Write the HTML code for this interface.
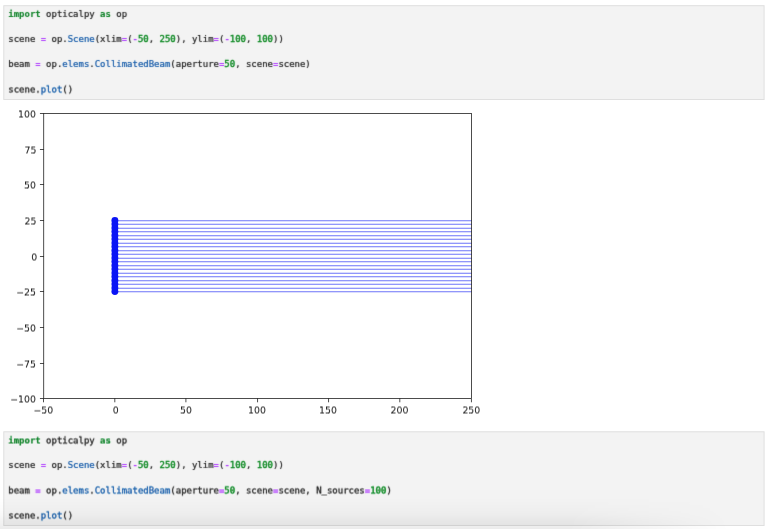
<!DOCTYPE html>
<html><head><meta charset="utf-8"><title>opticalpy</title>
<style>
html,body{margin:0;padding:0;background:#fff;}
body{width:768px;height:529px;position:relative;overflow:hidden;}
svg{position:absolute;left:0;top:0;display:block;will-change:transform;}
.c{font-family:"DejaVu Sans Mono","Liberation Mono",monospace;font-size:8.98px;color:#1e1e1e;fill:currentColor;stroke:currentColor;stroke-width:0.22px;white-space:pre;}
.h{stroke-width:0.3px;}
.h .k{stroke-width:0.2px;}
.h .o{stroke-width:0.15px;}
.h .n{stroke-width:0.5px;}
.k{color:#12842a;font-weight:bold;stroke-width:0.1px;}
.o{color:#b140ff;font-weight:bold;stroke-width:0;}
.n{color:#0c8a24;stroke-width:0.4px;}
.p{color:#1259a8;}
.t{font-family:"DejaVu Sans","Liberation Sans",sans-serif;font-size:9.4px;fill:#111;}
</style></head><body>
<svg width="768" height="529" viewBox="0 0 768 529">
<defs><filter id="fA" filterUnits="userSpaceOnUse" x="0" y="0" width="768" height="529"><feConvolveMatrix order="3 3" kernelMatrix="0.00810 0.07380 0.00810 0.07380 0.67240 0.07380 0.00810 0.07380 0.00810" edgeMode="none" preserveAlpha="false"/></filter><filter id="fC" filterUnits="userSpaceOnUse" x="0" y="0" width="768" height="529"><feConvolveMatrix order="3 2" kernelMatrix="0.00000 0.50000 0.00000 0.00000 0.50000 0.00000" targetX="1" targetY="0" edgeMode="none" preserveAlpha="false"/></filter><filter id="fB" filterUnits="userSpaceOnUse" x="0" y="0" width="768" height="529"><feConvolveMatrix order="3 2" kernelMatrix="0.04500 0.41000 0.04500 0.04500 0.41000 0.04500" targetX="1" targetY="0" edgeMode="none" preserveAlpha="false"/></filter></defs>
<rect x="3.80" y="5.70" width="760.30" height="93.80" fill="#f3f3f3" stroke="#dfdfdf" stroke-width="1"/>
<g filter="url(#fA)"><text class="c" xml:space="preserve" x="8.3" y="17"><tspan class="k">import</tspan> opticalpy <tspan class="k">as</tspan> op</text></g>
<g filter="url(#fA)"><text class="c" xml:space="preserve" x="8.3" y="42">scene <tspan class="o">=</tspan> op.<tspan class="p">Scene</tspan>(xlim<tspan class="o">=</tspan>(<tspan class="o">-</tspan><tspan class="n">50</tspan>, <tspan class="n">250</tspan>), ylim<tspan class="o">=</tspan>(<tspan class="o">-</tspan><tspan class="n">100</tspan>, <tspan class="n">100</tspan>))</text></g>
<g filter="url(#fA)"><text class="c" xml:space="preserve" x="8.3" y="67">beam <tspan class="o">=</tspan> op.<tspan class="p">elems</tspan>.<tspan class="p">CollimatedBeam</tspan>(aperture<tspan class="o">=</tspan><tspan class="n">50</tspan>, scene<tspan class="o">=</tspan>scene)</text></g>
<g filter="url(#fB)"><text class="c h" xml:space="preserve" x="8.3" y="93">scene.<tspan class="p">plot</tspan>()</text></g>
<line x1="115.04" y1="291.75" x2="471.50" y2="291.75" stroke="#0a14f5" stroke-opacity="0.92" stroke-width="0.65"/>
<line x1="115.04" y1="288.25" x2="471.50" y2="288.25" stroke="#0a14f5" stroke-opacity="0.92" stroke-width="0.65"/>
<line x1="115.04" y1="284.25" x2="471.50" y2="284.25" stroke="#0a14f5" stroke-opacity="0.92" stroke-width="0.65"/>
<line x1="115.04" y1="280.75" x2="471.50" y2="280.75" stroke="#0a14f5" stroke-opacity="0.92" stroke-width="0.65"/>
<line x1="115.04" y1="276.75" x2="471.50" y2="276.75" stroke="#0a14f5" stroke-opacity="0.92" stroke-width="0.65"/>
<line x1="115.04" y1="273.25" x2="471.50" y2="273.25" stroke="#0a14f5" stroke-opacity="0.92" stroke-width="0.65"/>
<line x1="115.04" y1="269.25" x2="471.50" y2="269.25" stroke="#0a14f5" stroke-opacity="0.92" stroke-width="0.65"/>
<line x1="115.04" y1="265.75" x2="471.50" y2="265.75" stroke="#0a14f5" stroke-opacity="0.92" stroke-width="0.65"/>
<line x1="115.04" y1="261.75" x2="471.50" y2="261.75" stroke="#0a14f5" stroke-opacity="0.92" stroke-width="0.65"/>
<line x1="115.04" y1="258.25" x2="471.50" y2="258.25" stroke="#0a14f5" stroke-opacity="0.92" stroke-width="0.65"/>
<line x1="115.04" y1="254.25" x2="471.50" y2="254.25" stroke="#0a14f5" stroke-opacity="0.92" stroke-width="0.65"/>
<line x1="115.04" y1="250.75" x2="471.50" y2="250.75" stroke="#0a14f5" stroke-opacity="0.92" stroke-width="0.65"/>
<line x1="115.04" y1="246.75" x2="471.50" y2="246.75" stroke="#0a14f5" stroke-opacity="0.92" stroke-width="0.65"/>
<line x1="115.04" y1="243.25" x2="471.50" y2="243.25" stroke="#0a14f5" stroke-opacity="0.92" stroke-width="0.65"/>
<line x1="115.04" y1="239.25" x2="471.50" y2="239.25" stroke="#0a14f5" stroke-opacity="0.92" stroke-width="0.65"/>
<line x1="115.04" y1="235.75" x2="471.50" y2="235.75" stroke="#0a14f5" stroke-opacity="0.92" stroke-width="0.65"/>
<line x1="115.04" y1="231.75" x2="471.50" y2="231.75" stroke="#0a14f5" stroke-opacity="0.92" stroke-width="0.65"/>
<line x1="115.04" y1="228.25" x2="471.50" y2="228.25" stroke="#0a14f5" stroke-opacity="0.92" stroke-width="0.65"/>
<line x1="115.04" y1="224.25" x2="471.50" y2="224.25" stroke="#0a14f5" stroke-opacity="0.92" stroke-width="0.65"/>
<line x1="115.04" y1="220.75" x2="471.50" y2="220.75" stroke="#0a14f5" stroke-opacity="0.92" stroke-width="0.65"/>
<circle cx="114.89" cy="291.62" r="3.45" fill="#0a14f5"/>
<circle cx="114.89" cy="287.88" r="3.45" fill="#0a14f5"/>
<circle cx="114.89" cy="284.12" r="3.45" fill="#0a14f5"/>
<circle cx="114.89" cy="280.38" r="3.45" fill="#0a14f5"/>
<circle cx="114.89" cy="276.62" r="3.45" fill="#0a14f5"/>
<circle cx="114.89" cy="272.88" r="3.45" fill="#0a14f5"/>
<circle cx="114.89" cy="269.12" r="3.45" fill="#0a14f5"/>
<circle cx="114.89" cy="265.38" r="3.45" fill="#0a14f5"/>
<circle cx="114.89" cy="261.62" r="3.45" fill="#0a14f5"/>
<circle cx="114.89" cy="257.88" r="3.45" fill="#0a14f5"/>
<circle cx="114.89" cy="254.12" r="3.45" fill="#0a14f5"/>
<circle cx="114.89" cy="250.38" r="3.45" fill="#0a14f5"/>
<circle cx="114.89" cy="246.62" r="3.45" fill="#0a14f5"/>
<circle cx="114.89" cy="242.88" r="3.45" fill="#0a14f5"/>
<circle cx="114.89" cy="239.12" r="3.45" fill="#0a14f5"/>
<circle cx="114.89" cy="235.38" r="3.45" fill="#0a14f5"/>
<circle cx="114.89" cy="231.62" r="3.45" fill="#0a14f5"/>
<circle cx="114.89" cy="227.88" r="3.45" fill="#0a14f5"/>
<circle cx="114.89" cy="224.12" r="3.45" fill="#0a14f5"/>
<circle cx="114.89" cy="220.38" r="3.45" fill="#0a14f5"/>
<rect x="43.75" y="113.5" width="427.75" height="285.00" fill="none" stroke="#000" stroke-width="0.7"/>
<line x1="39.95" y1="113.50" x2="43.75" y2="113.50" stroke="#000" stroke-width="0.7"/>
<g filter="url(#fC)"><text class="t" x="36.02" y="118" text-anchor="end">100</text></g>
<line x1="39.95" y1="149.50" x2="43.75" y2="149.50" stroke="#000" stroke-width="0.7"/>
<g filter="url(#fC)"><text class="t" x="36.50" y="154" text-anchor="end">75</text></g>
<line x1="39.95" y1="184.50" x2="43.75" y2="184.50" stroke="#000" stroke-width="0.7"/>
<g filter="url(#fC)"><text class="t" x="36.05" y="189" text-anchor="end">50</text></g>
<line x1="39.95" y1="220.50" x2="43.75" y2="220.50" stroke="#000" stroke-width="0.7"/>
<g filter="url(#fC)"><text class="t" x="36.43" y="225" text-anchor="end">25</text></g>
<line x1="39.95" y1="256.50" x2="43.75" y2="256.50" stroke="#000" stroke-width="0.7"/>
<g filter="url(#fC)"><text class="t" x="37.15" y="261" text-anchor="end">0</text></g>
<line x1="39.95" y1="291.50" x2="43.75" y2="291.50" stroke="#000" stroke-width="0.7"/>
<g filter="url(#fC)"><text class="t" x="36.02" y="296" text-anchor="end">−25</text></g>
<line x1="39.95" y1="327.50" x2="43.75" y2="327.50" stroke="#000" stroke-width="0.7"/>
<g filter="url(#fC)"><text class="t" x="36.03" y="332" text-anchor="end">−50</text></g>
<line x1="39.95" y1="363.50" x2="43.75" y2="363.50" stroke="#000" stroke-width="0.7"/>
<g filter="url(#fC)"><text class="t" x="36.02" y="368" text-anchor="end">−75</text></g>
<line x1="39.95" y1="398.50" x2="43.75" y2="398.50" stroke="#000" stroke-width="0.7"/>
<g filter="url(#fC)"><text class="t" x="35.88" y="403" text-anchor="end">−100</text></g>
<line x1="43.50" y1="398.5" x2="43.50" y2="402.30" stroke="#000" stroke-width="0.7"/>
<g filter="url(#fC)"><text class="t" x="43.40" y="414" text-anchor="middle">−50</text></g>
<line x1="114.80" y1="398.5" x2="114.80" y2="402.30" stroke="#000" stroke-width="0.7"/>
<g filter="url(#fC)"><text class="t" x="115.80" y="414" text-anchor="middle">0</text></g>
<line x1="185.90" y1="398.5" x2="185.90" y2="402.30" stroke="#000" stroke-width="0.7"/>
<g filter="url(#fC)"><text class="t" x="185.92" y="414" text-anchor="middle">50</text></g>
<line x1="257.55" y1="398.5" x2="257.55" y2="402.30" stroke="#000" stroke-width="0.7"/>
<g filter="url(#fC)"><text class="t" x="256.99" y="414" text-anchor="middle">100</text></g>
<line x1="328.55" y1="398.5" x2="328.55" y2="402.30" stroke="#000" stroke-width="0.7"/>
<g filter="url(#fC)"><text class="t" x="327.99" y="414" text-anchor="middle">150</text></g>
<line x1="399.80" y1="398.5" x2="399.80" y2="402.30" stroke="#000" stroke-width="0.7"/>
<g filter="url(#fC)"><text class="t" x="399.50" y="414" text-anchor="middle">200</text></g>
<line x1="471.45" y1="398.5" x2="471.45" y2="402.30" stroke="#000" stroke-width="0.7"/>
<g filter="url(#fC)"><text class="t" x="471.35" y="414" text-anchor="middle">250</text></g>
<rect x="3.80" y="431.80" width="760.30" height="93.70" fill="#f3f3f3" stroke="#dfdfdf" stroke-width="1"/>
<g filter="url(#fB)"><text class="c h" xml:space="preserve" x="8.3" y="444"><tspan class="k">import</tspan> opticalpy <tspan class="k">as</tspan> op</text></g>
<g filter="url(#fA)"><text class="c" xml:space="preserve" x="8.3" y="468">scene <tspan class="o">=</tspan> op.<tspan class="p">Scene</tspan>(xlim<tspan class="o">=</tspan>(<tspan class="o">-</tspan><tspan class="n">50</tspan>, <tspan class="n">250</tspan>), ylim<tspan class="o">=</tspan>(<tspan class="o">-</tspan><tspan class="n">100</tspan>, <tspan class="n">100</tspan>))</text></g>
<g filter="url(#fB)"><text class="c h" xml:space="preserve" x="8.3" y="494">beam <tspan class="o">=</tspan> op.<tspan class="p">elems</tspan>.<tspan class="p">CollimatedBeam</tspan>(aperture<tspan class="o">=</tspan><tspan class="n">50</tspan>, scene<tspan class="o">=</tspan>scene, N_sources<tspan class="o">=</tspan><tspan class="n">100</tspan>)</text></g>
<g filter="url(#fB)"><text class="c h" xml:space="preserve" x="8.3" y="519">scene.<tspan class="p">plot</tspan>()</text></g>
<defs><linearGradient id="sv" x1="0" y1="0" x2="0" y2="1"><stop offset="0" stop-color="#000" stop-opacity="0"/><stop offset="0.5" stop-color="#000" stop-opacity="0.02"/><stop offset="1" stop-color="#000" stop-opacity="0.075"/></linearGradient><linearGradient id="sh" x1="0" y1="0" x2="1" y2="0"><stop offset="0" stop-color="#fff"/><stop offset="0.74" stop-color="#fff"/><stop offset="0.95" stop-color="#000"/></linearGradient><mask id="sm"><rect x="0" y="495" width="768" height="34" fill="url(#sh)"/></mask></defs>
<rect x="0" y="497" width="768" height="32" fill="url(#sv)" mask="url(#sm)"/>
</svg>
</body></html>
